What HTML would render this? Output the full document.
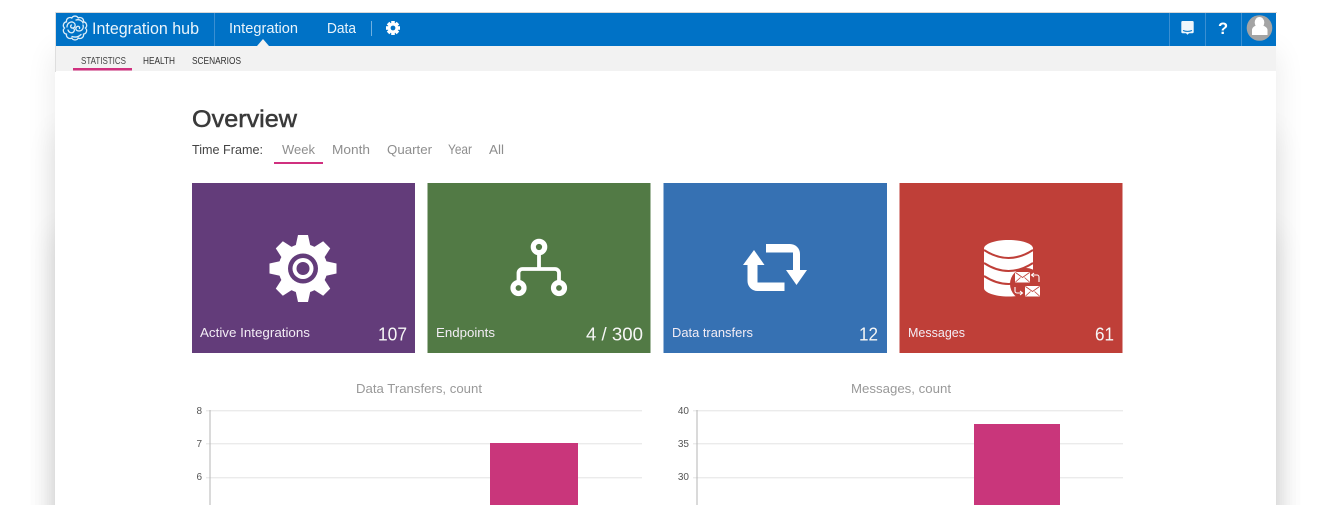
<!DOCTYPE html>
<html><head><meta charset="utf-8"><style>
html,body{margin:0;padding:0;width:1330px;height:505px;overflow:hidden;background:#fff}
#c{position:absolute;left:0;top:0;width:1330px;height:505px;overflow:hidden}
#w{position:absolute;left:55px;top:12px;width:1221px;height:493px;background:#fff;box-shadow:0 40px 28px rgba(0,0,0,.09),0 120px 28px rgba(0,0,0,.09),0 220px 28px rgba(0,0,0,.09)}
svg{position:absolute;left:0;top:0;filter:blur(.3px)}
text{font-family:"Liberation Sans",sans-serif}
</style></head><body>
<div id="c">
<div id="w"></div>
<svg width="1330" height="505" viewBox="0 0 1330 505">
<rect x="55" y="12" width="1222" height="1" fill="#d8d8d8"/>
<rect x="55" y="12" width="1" height="60" fill="#dedede"/>
<rect x="56" y="13" width="1220" height="33" fill="#0072c6"/>
<rect x="56" y="46" width="1220" height="25" fill="#f2f2f2"/>
<polygon points="257,46 263,39 269,46" fill="#f2f2f2"/>
<rect x="214" y="13" width="1" height="33" fill="#3a8fd2"/>
<rect x="371" y="21" width="1" height="15" fill="#6fb0e0"/>
<rect x="1169" y="13" width="1" height="33" fill="#3a8fd2"/>
<rect x="1205" y="13" width="1" height="33" fill="#3a8fd2"/>
<rect x="1241" y="13" width="1" height="33" fill="#3a8fd2"/>

<!-- logo -->
<g fill="none" stroke="#dcecf8" stroke-width="1.300" stroke-linecap="round">
<path d="M85.500 28A3.600 3.600 0 0 1 83.500 34.200A3.600 3.600 0 0 1 78.200 38A3.600 3.600 0 0 1 71.800 38A3.600 3.600 0 0 1 66.500 34.200A3.600 3.600 0 0 1 64.500 28A3.600 3.600 0 0 1 66.500 21.800A3.600 3.600 0 0 1 71.800 18A3.600 3.600 0 0 1 78.200 18A3.600 3.600 0 0 1 83.500 21.800A3.600 3.600 0 0 1 85.500 28Z"/>
<path d="M67 27c0-4 4-6 6.500-4.500s2 5-.5 5.500-3-2.500-1.500-3"/>
<path d="M83 25c1 3-1 6-4 6s-4-2.500-2.500-4 3.500-.5 3 1.500"/>
<path d="M68 30c1 3 4 3.500 5.500 2s1-3.500-.5-4"/>
<path d="M72 36.500c3 1 6.500 .5 9-2"/>
<path d="M76 20c3-1 6 .5 7 3"/>
</g>
<text x="92" y="34" font-size="16.500" fill="#eaf4fb" textLength="107" lengthAdjust="spacingAndGlyphs">Integration hub</text>
<text x="229" y="33" font-size="14.500" fill="#eaf4fb" textLength="69" lengthAdjust="spacingAndGlyphs">Integration</text>
<text x="327" y="33" font-size="14.500" fill="#eaf4fb" textLength="29" lengthAdjust="spacingAndGlyphs">Data</text>

<!-- small gear -->
<g transform="translate(393 28)" fill="#fff">
<rect x="-1.800" y="-7" width="3.600" height="14"/><rect x="-1.800" y="-7" width="3.600" height="14" transform="rotate(45)"/><rect x="-1.800" y="-7" width="3.600" height="14" transform="rotate(90)"/><rect x="-1.800" y="-7" width="3.600" height="14" transform="rotate(135)"/>
<circle r="5.200"/><circle r="2.400" fill="#0072c6"/>
</g>

<!-- chat -->
<path d="M1182.500 21h10a1.200 1.200 0 0 1 1.200 1.200V32a1.200 1.200 0 0 1-1.200 1.200h-3.500l-1.500 1.500-1.500-1.500h-3.500a1.200 1.200 0 0 1-1.200-1.200V22.200a1.200 1.200 0 0 1 1.200-1.200z" fill="#eef6fc"/>
<path d="M1183 30.500q4.500 1.800 9 0" fill="none" stroke="#0072c6" stroke-width="1"/>
<text x="1223" y="34" font-size="16.500" font-weight="bold" fill="#fff" text-anchor="middle">?</text>

<!-- avatar -->
<circle cx="1259.500" cy="28" r="12.800" fill="#a4a4a4"/>
<ellipse cx="1259.500" cy="22.500" rx="4.800" ry="5.500" fill="#fff"/>
<path d="M1252 35v-5c0-2 1.500-3.500 4-4.500h7c2.500 1 4.500 2.500 4.500 4.500v5z" fill="#fff"/>

<!-- subnav -->
<text x="81" y="64" font-size="10.500" fill="#444" textLength="45" lengthAdjust="spacingAndGlyphs">STATISTICS</text>
<text x="143" y="64" font-size="10.500" fill="#333" textLength="32" lengthAdjust="spacingAndGlyphs">HEALTH</text>
<text x="192" y="64" font-size="10.500" fill="#333" textLength="49" lengthAdjust="spacingAndGlyphs">SCENARIOS</text>
<rect x="73" y="68" width="59" height="2.500" fill="#d0307f"/>

<!-- overview -->
<text x="192" y="127" font-size="24" fill="#3a3a3a" stroke="#3a3a3a" stroke-width=".5" textLength="105" lengthAdjust="spacingAndGlyphs">Overview</text>
<text x="192" y="154" font-size="13" fill="#444" textLength="71" lengthAdjust="spacingAndGlyphs">Time Frame:</text>
<g font-size="13" fill="#8e8e8e">
<text x="282" y="154" textLength="33" lengthAdjust="spacingAndGlyphs">Week</text>
<text x="332" y="154" textLength="38" lengthAdjust="spacingAndGlyphs">Month</text>
<text x="387" y="154" textLength="45" lengthAdjust="spacingAndGlyphs">Quarter</text>
<text x="448" y="154" font-size="14" textLength="24" lengthAdjust="spacingAndGlyphs">Year</text>
<text x="489" y="154" textLength="15" lengthAdjust="spacingAndGlyphs">All</text>
</g>
<rect x="274" y="162" width="49" height="2" fill="#d0307f"/>

<!-- cards -->
<rect x="192" y="183" width="223" height="170" fill="#633c7a"/>
<rect x="427.500" y="183" width="223" height="170" fill="#527a45"/>
<rect x="663.500" y="183" width="223.500" height="170" fill="#3671b3"/>
<rect x="899.500" y="183" width="223" height="170" fill="#bf3f38"/>

<!-- big gear -->
<g transform="translate(303 268.500)" fill="#fff">
<path d="M-7.500 -22L-5 -33.500H5L7.500 -22Z"/>
<path d="M-7.500 -22L-5 -33.500H5L7.500 -22Z" transform="rotate(45)"/>
<path d="M-7.500 -22L-5 -33.500H5L7.500 -22Z" transform="rotate(90)"/>
<path d="M-7.500 -22L-5 -33.500H5L7.500 -22Z" transform="rotate(135)"/>
<path d="M-7.500 -22L-5 -33.500H5L7.500 -22Z" transform="rotate(180)"/>
<path d="M-7.500 -22L-5 -33.500H5L7.500 -22Z" transform="rotate(225)"/>
<path d="M-7.500 -22L-5 -33.500H5L7.500 -22Z" transform="rotate(270)"/>
<path d="M-7.500 -22L-5 -33.500H5L7.500 -22Z" transform="rotate(315)"/>
<circle r="24.500"/>
<circle r="15" fill="#633c7a"/>
<circle r="10.500" fill="#fff"/>
<circle r="6.500" fill="#633c7a"/>
</g>

<!-- endpoints -->
<g fill="none" stroke="#fff">
<g stroke-width="5.200"><circle cx="539" cy="247" r="5.700"/><circle cx="518.500" cy="288" r="5.500"/><circle cx="559" cy="288" r="5.500"/></g>
<path stroke-width="3.800" d="M539 253v16M518.500 282v-9a4 4 0 0 1 4-4h32.500a4 4 0 0 1 4 4v9"/>
</g>

<!-- transfers -->
<g fill="#fff">
<path d="M754 250l10.500 15h-7v17.500h27v8.500h-27a10 10 0 0 1-10-10V265h-4.500z"/>
<path d="M766 244h24a10 10 0 0 1 10 10v16h7l-10.500 15L786 270h7v-17.500h-27z"/>
</g>

<!-- messages db -->
<path d="M984 248.500c0-4.700 11-8.500 24.500-8.500s24.500 3.800 24.500 8.500V288c0 4.700-11 8.500-24.500 8.500S984 292.700 984 288z" fill="#fff"/>
<g fill="none" stroke="#bf3f38" stroke-width="2">
<path d="M984 250Q1008.500 266 1033 250M984 263Q1008.500 279 1033 263M984 276Q1008.500 292 1033 276"/>
</g>
<circle cx="1026" cy="284" r="16" fill="#bf3f38"/>
<rect x="1034" y="266" width="10" height="32" fill="#bf3f38"/>
<g>
<rect x="1015" y="272" width="15" height="10.500" rx=".8" fill="#fff"/>
<path d="M1015.500 272.500l7 5 7-5M1015.500 282l5-4.500M1029.500 282l-5-4.500" fill="none" stroke="#bf3f38" stroke-width=".8"/>
<rect x="1025" y="286" width="15" height="10.500" rx=".8" fill="#fff"/>
<path d="M1025.500 286.500l7 5 7-5M1025.500 296l5-4.500M1039.500 296l-5-4.500" fill="none" stroke="#bf3f38" stroke-width=".8"/>
<path d="M1032 275h5a2 2 0 0 1 2 2v5M1034 273l-2.500 2 2.500 2M1015 287v4a2 2 0 0 0 2 2h5M1020 291l2.500 2-2.500 2" fill="none" stroke="#fff" stroke-width="1.100"/>
</g>

<!-- card labels -->
<g fill="#f3edf5" font-size="13">
<text x="200" y="337" textLength="110" lengthAdjust="spacingAndGlyphs">Active Integrations</text>
<text x="436" y="337" textLength="59" lengthAdjust="spacingAndGlyphs">Endpoints</text>
<text x="672" y="337" textLength="81" lengthAdjust="spacingAndGlyphs">Data transfers</text>
<text x="908" y="337" textLength="57" lengthAdjust="spacingAndGlyphs">Messages</text>
</g>
<g fill="#f6f6f6" font-size="18.500">
<text x="378" y="340.500" textLength="29" lengthAdjust="spacingAndGlyphs">107</text>
<text x="586" y="340.500" textLength="57" lengthAdjust="spacingAndGlyphs">4 / 300</text>
<text x="859" y="340.500" textLength="19" lengthAdjust="spacingAndGlyphs">12</text>
<text x="1095" y="340.500" textLength="19" lengthAdjust="spacingAndGlyphs">61</text>
</g>

<!-- chart 1 -->
<text x="356" y="393" font-size="12.500" fill="#999" textLength="126" lengthAdjust="spacingAndGlyphs">Data Transfers, count</text>
<g fill="#ebebeb">
<rect x="206" y="410" width="436" height="1.400"/>
<rect x="206" y="443" width="436" height="1.400"/>
<rect x="206" y="477" width="436" height="1.400"/>
</g>
<rect x="209.500" y="410" width="1" height="95" fill="#b5b5b5"/>
<g font-size="10" fill="#555" text-anchor="end">
<text x="202" y="414">8</text><text x="202" y="447">7</text><text x="202" y="480">6</text>
</g>
<rect x="490" y="443" width="88" height="62" fill="#c9367b"/>

<!-- chart 2 -->
<text x="851" y="393" font-size="12.500" fill="#999" textLength="100" lengthAdjust="spacingAndGlyphs">Messages, count</text>
<g fill="#ebebeb">
<rect x="693" y="410" width="430" height="1.400"/>
<rect x="693" y="443" width="430" height="1.400"/>
<rect x="693" y="477" width="430" height="1.400"/>
</g>
<rect x="696.500" y="410" width="1" height="95" fill="#b5b5b5"/>
<g font-size="10" fill="#555" text-anchor="end">
<text x="689" y="414">40</text><text x="689" y="447">35</text><text x="689" y="480">30</text>
</g>
<rect x="974" y="424" width="86" height="81" fill="#c9367b"/>
</svg>
</div>
</body></html>
